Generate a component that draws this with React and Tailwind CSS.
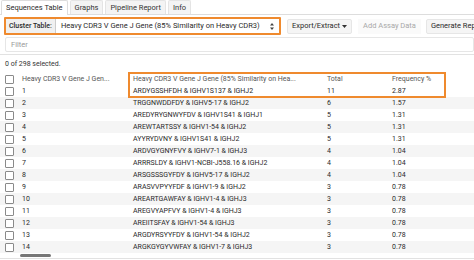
import { useState } from 'react';

const rows = [
  ['ARDYGSSHFDH & IGHV1S137 & IGHJ2', '11', '2.87'],
  ['TRGGNWDDFDY & IGHV5-17 & IGHJ2', '6', '1.57'],
  ['AREDYRYGNWYFDV & IGHV1S41 & IGHJ1', '5', '1.31'],
  ['AREWTARTSSY & IGHV1-54 & IGHJ2', '5', '1.31'],
  ['AYYRYDVNY & IGHV1S41 & IGHJ2', '5', '1.31'],
  ['ARDVGYGNYFVY & IGHV7-1 & IGHJ3', '4', '1.04'],
  ['ARRRSLDY & IGHV1-NCBI-J558.16 & IGHJ2', '4', '1.04'],
  ['ARSGSSSGYFDY & IGHV5-17 & IGHJ2', '4', '1.04'],
  ['ARASVVPYYFDF & IGHV1-9 & IGHJ2', '3', '0.78'],
  ['AREARTGAWFAY & IGHV1-4 & IGHJ3', '3', '0.78'],
  ['AREGVYAPFVY & IGHV1-4 & IGHJ3', '3', '0.78'],
  ['AREIITSFAY & IGHV1-54 & IGHJ3', '3', '0.78'],
  ['ARGDYRSYYFDY & IGHV1-54 & IGHJ2', '3', '0.78'],
  ['ARGKGYGYVWFAY & IGHV1-7 & IGHJ3', '3', '0.78'],
];

const Checkbox = () => (
  <span className="block w-[9px] h-[9px] border border-[#8a8a8a] rounded-[1px] bg-white" />
);

const cols = 'grid grid-cols-[18px_110px_194px_66px_1fr] h-[12px] items-center';

const App = () => {
  const [tab] = useState('Sequences Table');
  const tabs = ['Sequences Table', 'Graphs', 'Pipeline Report', 'Info'];

  return (
    <div className="w-[474px] h-[260px] overflow-hidden bg-white text-[#2a2a2a] font-['Roboto',Arial,sans-serif] text-[7px] leading-none">
      {/* Tabs */}
      <div className="flex gap-[2px] h-[15px] border-b border-[#ddd] px-[1px]">
        {tabs.map((t) => (
          <div
            key={t}
            className={`flex items-center px-[4px] border border-b-0 rounded-t-[2px] text-[7.5px] whitespace-nowrap ${
              t === tab ? 'bg-white border-[#ddd] -mb-[1px]' : 'bg-[#f4f4f4] border-[#e4e4e4] text-[#333]'
            }`}
          >
            {t}
          </div>
        ))}
      </div>

      {/* Toolbar */}
      <div className="flex items-center h-[20px] mt-[1px] pl-[4px] whitespace-nowrap">
        <div className="flex shrink-0 items-stretch h-[18px] w-[277px] border-2 border-[#ef8a2e] rounded-[1px]">
          <div className="flex items-center px-[3px] bg-[#f0f0f0] border-r border-[#ccc] text-[7px] font-medium">
            Cluster Table:
          </div>
          <div className="flex flex-1 items-center justify-between pl-[5px] pr-[5px] text-[7.5px]">
            <span>Heavy CDR3 V Gene J Gene (85% Similarity on Heavy CDR3)</span>
            <svg width="4" height="7" viewBox="0 0 4 7" className="shrink-0">
              <path d="M2 0 L4 2.6 L0 2.6 Z M2 7 L4 4.4 L0 4.4 Z" fill="#444" />
            </svg>
          </div>
        </div>
        <div className="flex shrink-0 items-center h-[15px] ml-[6px] px-[4px] bg-[#f5f5f5] border border-[#e6e6e6] rounded-[2px] text-[7.5px]">
          Export/Extract
          <svg width="5" height="3" viewBox="0 0 5 3" className="ml-[2px]">
            <path d="M0 0 L5 0 L2.5 3 Z" fill="#333" />
          </svg>
        </div>
        <div className="flex shrink-0 items-center h-[15px] ml-[6px] px-[5px] bg-[#fafafa] text-[#a8a8a8] text-[7.5px]">
          Add Assay Data
        </div>
        <div className="flex shrink-0 items-center h-[15px] ml-[5px] px-[4px] bg-[#f5f5f5] border border-[#e6e6e6] rounded-[2px] text-[7.5px]">
          Generate Report
        </div>
      </div>

      {/* Filter */}
      <div className="ml-[5px] mt-[1px] h-[15px] flex items-center pl-[5px] border border-[#e6e6e6] rounded-[2px] text-[#9a9a9a] text-[7.5px]">
        Filter
      </div>
      <div className="mt-[2px] border-t border-[#e2e2e2]" />

      <div className="h-[18px] flex items-center pl-[5px] text-[7px] text-[#333]">0 of 298 selected.</div>

      {/* Table */}
      <div className="relative">
        <div className={`${cols} text-[#555]`}>
          <div className="pl-[5px]"><Checkbox /></div>
          <div className="pl-[4px]">Heavy CDR3 V Gene J Gen...</div>
          <div className="pl-[5px]">Heavy CDR3 V Gene J Gene (85% Similarity on Hea...</div>
          <div className="pl-[5px]">Total</div>
          <div className="pl-[4px]">Frequency %</div>
        </div>
        {rows.map((r, i) => (
          <div key={i} className={`${cols} ${i % 2 === 1 ? 'bg-[#f5f5f5]' : 'bg-white'}`}>
            <div className="pl-[5px]"><Checkbox /></div>
            <div className="pl-[4px]">{i + 1}</div>
            <div className="pl-[5px] whitespace-nowrap">{r[0]}</div>
            <div className="pl-[5px]">{r[1]}</div>
            <div className="pl-[4px]">{r[2]}</div>
          </div>
        ))}
        {/* scrollbar strip and next row edge */}
        <div className="h-[5px]" />
        <div className={`${cols} border-t border-[#e2e2e2] items-start pt-[2px]`}>
          <div className="pl-[5px]"><Checkbox /></div>
        </div>

        {/* Highlight box */}
        <div className="absolute left-[128px] top-[-1px] w-[318px] h-[26px] border-2 border-[#ef8a2e] pointer-events-none" />
        {/* Horizontal scrollbar */}
        <div className="absolute left-[20px] top-[181px] w-[31px] h-[3px] rounded-full bg-[#777]" />
      </div>
    </div>
  );
};

export default App;
